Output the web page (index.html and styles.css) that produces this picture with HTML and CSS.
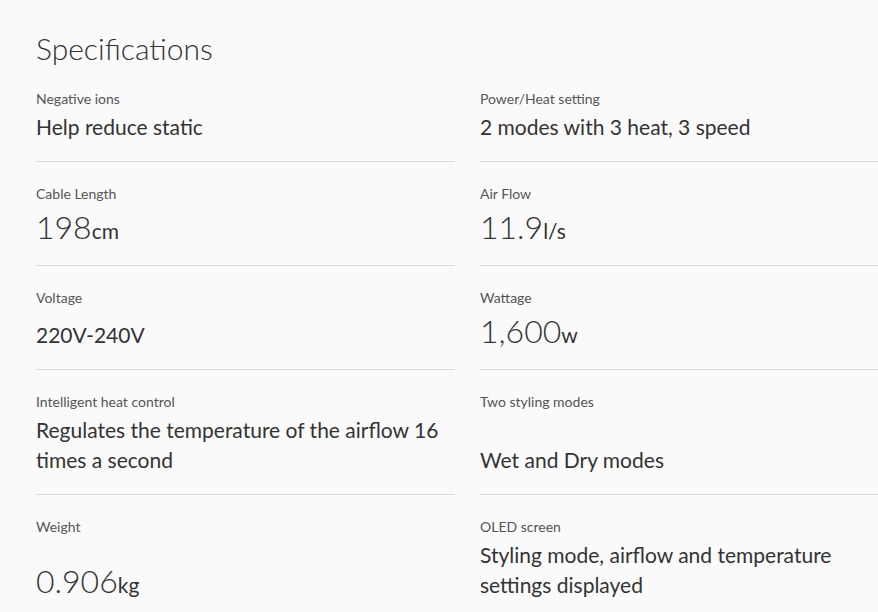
FILE: index.html
```html
<!DOCTYPE html>
<html lang="en">
<head>
<meta charset="utf-8">
<title>Specifications</title>
<link rel="stylesheet" href="styles.css">
</head>
<body>
<section class="specs">
  <h2 class="specs-title">Specifications</h2>
  <div class="specs-grid">
    <div class="spec">
      <div class="spec-label">Negative ions</div>
      <div class="spec-value">Help reduce static</div>
    </div>
    <div class="spec">
      <div class="spec-label">Power/Heat setting</div>
      <div class="spec-value">2 modes with 3 heat, 3 speed</div>
    </div>
    <div class="spec">
      <div class="spec-label">Cable Length</div>
      <div class="spec-value spec-number">198<span class="unit">cm</span></div>
    </div>
    <div class="spec">
      <div class="spec-label">Air Flow</div>
      <div class="spec-value spec-number">11.9<span class="unit">l/s</span></div>
    </div>
    <div class="spec">
      <div class="spec-label">Voltage</div>
      <div class="spec-value">220V-240V</div>
    </div>
    <div class="spec">
      <div class="spec-label">Wattage</div>
      <div class="spec-value spec-number">1,600<span class="unit">w</span></div>
    </div>
    <div class="spec">
      <div class="spec-label">Intelligent heat control</div>
      <div class="spec-value">Regulates the temperature of the airflow 16 times a second</div>
    </div>
    <div class="spec">
      <div class="spec-label">Two styling modes</div>
      <div class="spec-value">Wet and Dry modes</div>
    </div>
    <div class="spec">
      <div class="spec-label">Weight</div>
      <div class="spec-value spec-number">0.906<span class="unit">kg</span></div>
    </div>
    <div class="spec">
      <div class="spec-label">OLED screen</div>
      <div class="spec-value">Styling mode, airflow and temperature settings displayed</div>
    </div>
  </div>
</section>
</body>
</html>
```

FILE: styles.css
```css
html, body {
  margin: 0;
  padding: 0;
  background: #fafafa;
  overflow: hidden;
}

body {
  font-family: Lato, "Open Sans", sans-serif;
  color: #333;
}

.specs {
  padding: 28px 0 0 36px;
  width: 900px;
}

.specs-title {
  margin: 0 0 21px 0;
  font-size: 30px;
  line-height: 40px;
  font-weight: 300;
  color: #333;
}

.specs-grid {
  display: grid;
  grid-template-columns: 419px 419px;
  column-gap: 25px;
}

.spec {
  display: flex;
  flex-direction: column;
  padding: 0 0 19px 0;
  border-bottom: 1px solid #dadada;
}

.specs-grid .spec:nth-child(n+3) {
  padding-top: 22px;
}

.spec-label {
  font-size: 14px;
  line-height: 20px;
  color: #555;
  margin-bottom: 3px;
}

.spec-value {
  margin-top: auto;
  font-size: 21px;
  line-height: 30px;
  color: #333;
}

.spec-number {
  font-size: 32px;
  line-height: 39px;
  font-weight: 300;
}

.unit {
  font-size: 21px;
  line-height: 1;
  font-weight: 400;
}
```
